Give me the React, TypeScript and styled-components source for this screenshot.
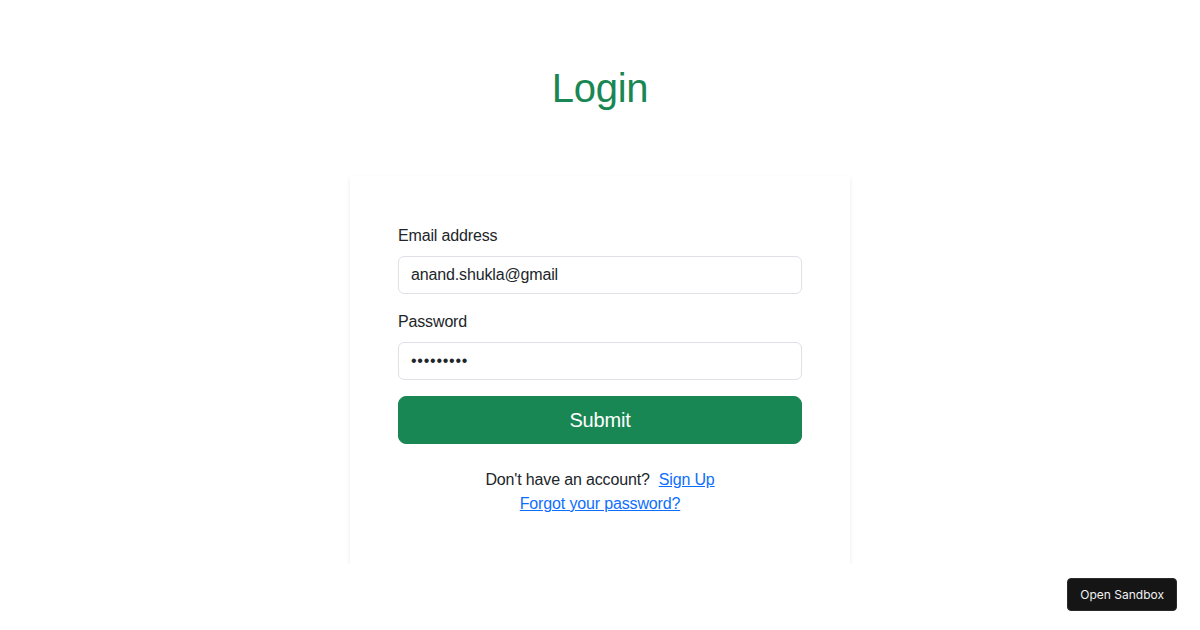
import styled, { createGlobalStyle } from 'styled-components';

const GlobalStyle = createGlobalStyle`
  * {
    box-sizing: border-box;
  }
  body {
    margin: 0;
    background: #fff;
    color: #212529;
    font-family: "Liberation Sans", Arial, sans-serif;
    font-size: 16px;
    line-height: 1.5;
    letter-spacing: -0.15px;
  }
`;

const Page = styled.main`
  display: flex;
  flex-direction: column;
  align-items: center;
  padding-top: 64px;
`;

const Title = styled.h1`
  margin: 0 0 64px;
  font-size: 40px;
  font-weight: 400;
  line-height: 1.2;
  letter-spacing: -0.3px;
  color: #198754;
`;

const Card = styled.div`
  width: 500px;
  padding: 48px;
  background: #fff;
  box-shadow: 0 2px 4px rgba(0, 0, 0, 0.09);
`;

const Form = styled.form`
  display: flex;
  flex-direction: column;
`;

const Field = styled.div`
  display: flex;
  flex-direction: column;
  margin-bottom: 16px;
`;

const Label = styled.label`
  margin-bottom: 8px;
`;

const Input = styled.input<{ $wide?: boolean }>`
  height: 38px;
  padding: 6px 12px;
  font: inherit;
  letter-spacing: ${p => (p.$wide ? '0.75px' : 'inherit')};
  color: #212529;
  background: #fff;
  border: 1px solid #dee2e6;
  border-radius: 6px;
  outline: none;
`;

const SubmitButton = styled.button`
  height: 48px;
  padding: 8px 16px;
  font-family: inherit;
  font-size: 20px;
  line-height: 1.5;
  letter-spacing: -0.2px;
  color: #fff;
  background: #198754;
  border: 1px solid #198754;
  border-radius: 8px;
  cursor: pointer;
`;

const Footer = styled.div`
  margin-top: 24px;
  display: flex;
  flex-direction: column;
  align-items: center;
`;

const Link = styled.a<{ $gap?: boolean }>`
  color: #0d6efd;
  text-decoration: underline;
  margin-left: ${p => (p.$gap ? '9px' : '0')};
`;

const SandboxButton = styled.a`
  position: fixed;
  right: 23px;
  bottom: 19px;
  padding: 7px 12px;
  font-family: Inter, "Liberation Sans", sans-serif;
  font-size: 12px;
  line-height: 17px;
  letter-spacing: 0;
  color: #f2f2f2;
  background: #151515;
  border: 1px solid #2a2a2a;
  border-radius: 4px;
  text-decoration: none;
`;

export default function App() {
  return (
    <>
      <GlobalStyle />
      <Page>
        <Title>Login</Title>
        <Card>
          <Form onSubmit={e => e.preventDefault()}>
            <Field>
              <Label htmlFor="email">Email address</Label>
              <Input id="email" type="email" defaultValue="anand.shukla@gmail" />
            </Field>
            <Field>
              <Label htmlFor="password">Password</Label>
              <Input id="password" type="password" defaultValue="123456789" $wide />
            </Field>
            <SubmitButton type="submit">Submit</SubmitButton>
          </Form>
          <Footer>
            <div>
              Don't have an account?
              <Link href="#" $gap>Sign Up</Link>
            </div>
            <Link href="#">Forgot your password?</Link>
          </Footer>
        </Card>
      </Page>
      <SandboxButton href="#">Open Sandbox</SandboxButton>
    </>
  );
}
